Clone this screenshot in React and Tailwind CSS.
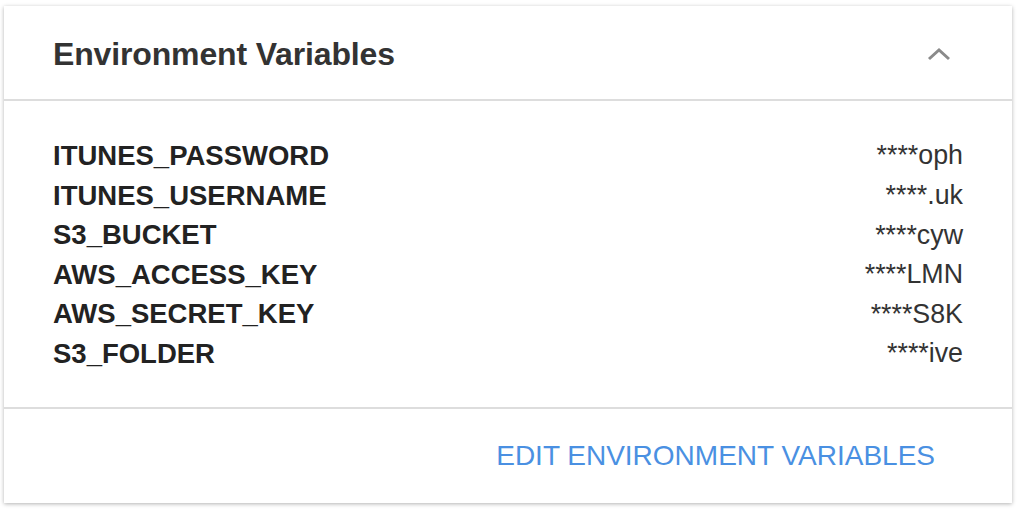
export default function App() {
  const rows = [
    ["ITUNES_PASSWORD", "****oph"],
    ["ITUNES_USERNAME", "****.uk"],
    ["S3_BUCKET", "****cyw"],
    ["AWS_ACCESS_KEY", "****LMN"],
    ["AWS_SECRET_KEY", "****S8K"],
    ["S3_FOLDER", "****ive"],
  ];
  return (
    <div className="w-[1018px] h-[512px] bg-white pt-[6px] pl-[4px]" style={{ fontFamily: '"Liberation Sans", Arial, sans-serif' }}>
      <div className="w-[1008px] bg-white shadow-[0_1px_4px_rgba(0,0,0,0.3)]">
        <div className="h-[95px] flex items-center justify-between pl-[49px] pr-[61px] border-b-2 border-[#dddddd]">
          <div className="text-[32px] font-bold text-[#333333] tracking-[-0.15px] mt-[3px]">Environment Variables</div>
          <svg width="24" height="14" viewBox="0 0 24 14" className="mt-[2px]">
            <path d="M2 12 L12 3 L22 12" fill="none" stroke="#8a8a8a" strokeWidth="3" />
          </svg>
        </div>
        <div className="pt-[35px] pb-[33px] pl-[49px] pr-[49px] border-b-2 border-[#dddddd]">
          {rows.map(([k, v]) => (
            <div key={k} className="h-[39.6px] flex items-center justify-between leading-none">
              <span className="font-bold text-[#222222] text-[27.5px]">{k}</span>
              <span className="text-[#333333] text-[26.8px]">{v}</span>
            </div>
          ))}
        </div>
        <div className="h-[94px] flex items-center justify-end pr-[77px]">
          <span className="text-[28px] text-[#4a90e2]">EDIT ENVIRONMENT VARIABLES</span>
        </div>
      </div>
    </div>
  );
}
